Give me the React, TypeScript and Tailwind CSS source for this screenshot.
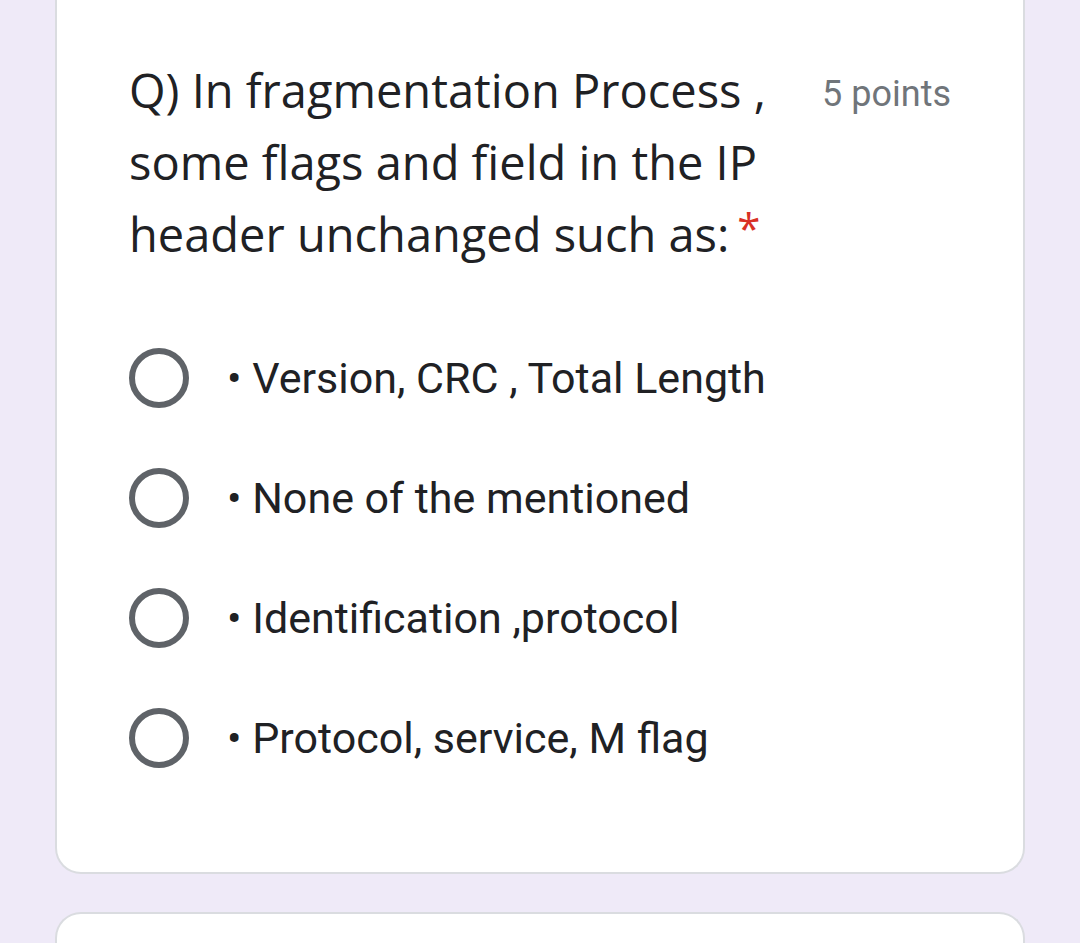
import React from "react";

const options = [
  "Version, CRC , Total Length",
  "None of the mentioned",
  "Identification ,protocol",
  "Protocol, service, M flag",
];

function Radio() {
  return <div className="w-[60px] h-[60px] rounded-full border-[6px] border-[#5f6368] shrink-0" />;
}

export default function App() {
  return (
    <div className="w-[1080px] h-[943px] bg-[#efeaf8] px-[55px] overflow-hidden">
      <div className="bg-white border-x-2 border-b-2 border-[#dadce0] rounded-b-[26px] pl-[72px] pr-[72px] pt-[54px] pb-[104px]">
        <div className="flex justify-between items-start">
          <div
            className="text-[47px] leading-[72px] text-[#202124]"
            style={{ fontFamily: '"Open Sans", sans-serif' }}
          >
            Q) In fragmentation Process ,<br />
            some flags and field in the IP<br />
            header unchanged such as:<span className="text-[#d93025] text-[42px] ml-[8px] relative top-[-8px]">*</span>
          </div>
          <div
            className="text-[36px] text-[#70757a] mt-[13px]"
            style={{ fontFamily: 'Roboto, sans-serif' }}
          >
            5 points
          </div>
        </div>
        <div className="mt-[76px] flex flex-col gap-[60px]" style={{ fontFamily: 'Roboto, sans-serif' }}>
          {options.map((o) => (
            <div key={o} className="flex items-center h-[60px]">
              <Radio />
              <span className="ml-[38px] text-[43px] text-[#202124]">• {o}</span>
            </div>
          ))}
        </div>
      </div>
      <div className="mt-[38px] bg-white border-x-2 border-t-2 border-[#dadce0] rounded-t-[26px] h-[100px]" />
    </div>
  );
}
